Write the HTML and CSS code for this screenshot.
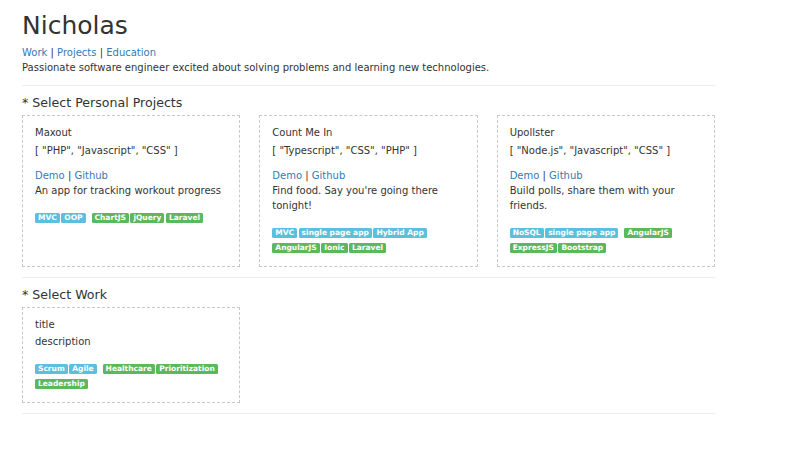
FILE: index.html
```html
<!DOCTYPE html>
<html>
<head>
<meta charset="utf-8">
<link rel="stylesheet" href="styles.css">
</head>
<body>
<div class="page">
  <header class="intro">
    <h1 class="name">Nicholas</h1>
    <nav class="nav"><a href="#">Work</a> | <a href="#">Projects</a> | <a href="#">Education</a></nav>
    <p class="tagline">Passionate software engineer excited about solving problems and learning new technologies.</p>
  </header>
  <hr class="rule">
  <section>
    <h4 class="section-title">* Select Personal Projects</h4>
    <div class="grid">
      <div class="card">
        <div class="card-title">Maxout</div>
        <div class="stack">[ "PHP", "Javascript", "CSS" ]</div>
        <div class="links"><a href="#">Demo</a> | <a href="#">Github</a></div>
        <div class="desc">An app for tracking workout progress</div>
        <div class="badges">
          <span class="badge info">MVC</span><span class="badge info end">OOP</span><span class="badge ok">ChartJS</span><span class="badge ok">jQuery</span><span class="badge ok end">Laravel</span>
        </div>
      </div>
      <div class="card">
        <div class="card-title">Count Me In</div>
        <div class="stack">[ "Typescript", "CSS", "PHP" ]</div>
        <div class="links"><a href="#">Demo</a> | <a href="#">Github</a></div>
        <div class="desc">Find food. Say you're going there tonight!</div>
        <div class="badges">
          <span class="badge info">MVC</span><span class="badge info">single page app</span><span class="badge info end">Hybrid App</span><span class="badge ok">AngularJS</span><span class="badge ok">Ionic</span><span class="badge ok end">Laravel</span>
        </div>
      </div>
      <div class="card">
        <div class="card-title">Upollster</div>
        <div class="stack">[ "Node.js", "Javascript", "CSS" ]</div>
        <div class="links"><a href="#">Demo</a> | <a href="#">Github</a></div>
        <div class="desc">Build polls, share them with your friends.</div>
        <div class="badges">
          <span class="badge info">NoSQL</span><span class="badge info end">single page app</span><span class="badge ok">AngularJS</span><span class="badge ok">ExpressJS</span><span class="badge ok end">Bootstrap</span>
        </div>
      </div>
    </div>
  </section>
  <hr class="rule">
  <section>
    <h4 class="section-title">* Select Work</h4>
    <div class="grid">
      <div class="card">
        <div class="card-title">title</div>
        <div class="desc work-desc">description</div>
        <div class="badges">
          <span class="badge info">Scrum</span><span class="badge info end">Agile</span><span class="badge ok">Healthcare</span><span class="badge ok">Prioritization</span><span class="badge ok end">Leadership</span>
        </div>
      </div>
    </div>
  </section>
  <hr class="rule">
</div>
</body>
</html>
```

FILE: styles.css
```css
html, body {
  margin: 0;
  padding: 0;
  background: #fff;
}

body {
  font-family: "DejaVu Sans", sans-serif;
  font-size: 10px;
  line-height: 15px;
  color: #333;
}

a {
  color: #337ab7;
  text-decoration: none;
}

.page {
  width: 693px;
  padding-left: 22px;
}

.name {
  font-size: 25px;
  font-weight: normal;
  line-height: 28px;
  margin: 12px 0 5px;
}

.nav {
  display: block;
}

.tagline {
  margin: 0;
}

.rule {
  border: 0;
  border-top: 1px solid #eee;
  margin: 10px 0;
}

.section-title {
  font-size: 12.6px;
  font-weight: normal;
  line-height: 14px;
  margin: 10px 0 5px;
}

.grid {
  display: grid;
  grid-template-columns: repeat(3, 1fr);
  column-gap: 19px;
}

.card {
  border: 1.5px dashed #c8c8c8;
  padding: 9px 12px 13px;
}

.card-title {
  margin-bottom: 3px;
}

.stack {
  margin-bottom: 10px;
}

.work-desc {
  margin-top: -1px;
}

.badges {
  display: flex;
  flex-wrap: wrap;
  row-gap: 5px;
  margin-top: 15px;
}

.badge {
  font-size: 7.5px;
  font-weight: bold;
  line-height: 10px;
  height: 10px;
  padding: 0 3px;
  color: #fff;
  border-radius: 1.5px;
  margin-right: 1.5px;
  white-space: nowrap;
}

.badge.end {
  margin-right: 6px;
}

.info {
  background: #5bc0de;
}

.ok {
  background: #5cb85c;
}
```
